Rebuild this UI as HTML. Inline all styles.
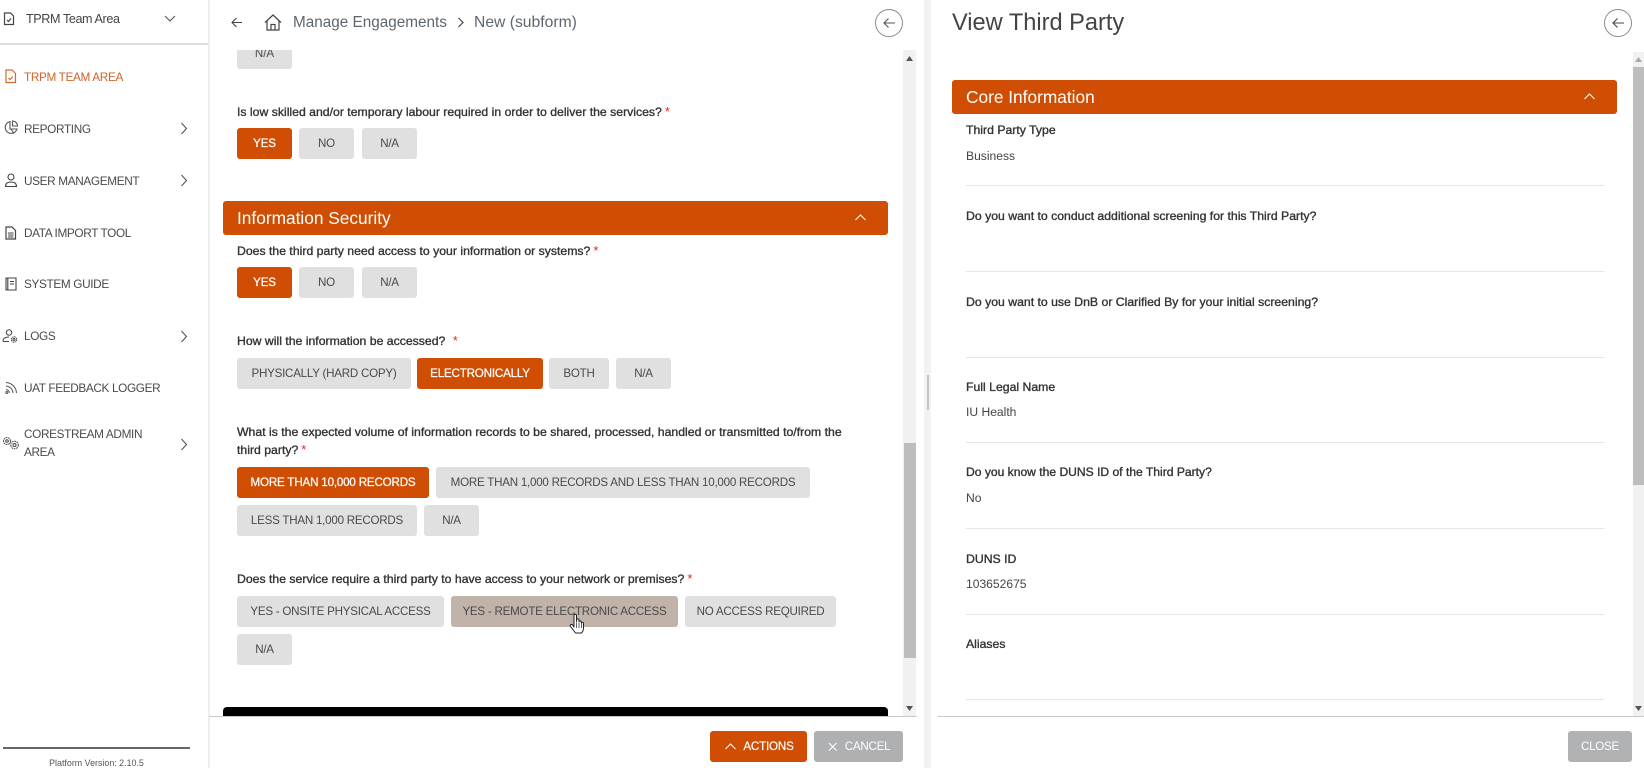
<!DOCTYPE html>
<html lang="en"><head><meta charset="utf-8"><title>View Third Party</title>
<style>
html,body{margin:0;padding:0;width:1644px;height:768px;overflow:hidden;background:#fff}
body{font-family:"Liberation Sans",Arial,sans-serif;position:relative;color:#333}
.a,.t,.b,.l,.v,.n{position:absolute}
.t,.l,.v,.n{white-space:nowrap}
.n{left:24px;font-size:11.8px;letter-spacing:-.36px;line-height:16px;color:#4a4a4a}
.l{font-size:12.25px;line-height:16px;color:#333;-webkit-text-stroke:.35px #333}
.l i{color:#e22;font-style:normal;-webkit-text-stroke:0;font-size:13px;margin-left:3px}
.v{font-size:12.1px;line-height:16px;color:#444;left:966px}
.b{height:31px;line-height:31px;background:#e0e0e0;color:#4a4a4a;font-size:11.6px;letter-spacing:-.24px;text-align:center;border-radius:3px;white-space:nowrap}
.b.o{background:#d04e03;color:#fff;-webkit-text-stroke:.25px #fff;letter-spacing:-.18px}
.bar{position:absolute;height:34px;background:#d04e03;border-radius:3px}
.bar span{position:absolute;top:0;line-height:34px;color:#fff;font-size:17.3px;white-space:nowrap}
.line{position:absolute;left:966px;width:638px;height:1px;background:#e6e6e6}
svg{position:absolute;overflow:visible;fill:none}
</style></head><body>

<!-- Sidebar -->
<div class="a" style="left:208px;top:0;width:2px;height:768px;background:#eeeeee"></div>
<div class="a" style="left:0;top:43px;width:208px;height:2px;background:#dcdcdc"></div>
<svg style="left:3px;top:12px" width="12" height="14" stroke="#444" stroke-width="1.2"><path d="M1.500 1h6l3 3v8.500h-9z"/><path d="M4 8l1.500 1.500L8 6.500"/></svg>
<div class="t" style="left:26px;top:11px;font-size:12.6px;letter-spacing:-.4px;line-height:16px;color:#444">TPRM Team Area</div>
<svg style="left:164px;top:15px" width="12" height="8" stroke="#555" stroke-width="1.1"><path d="M1 1l5 5 5-5"/></svg>

<svg style="left:5px;top:69px" width="12" height="15" stroke="#d2692e" stroke-width="1.2"><path d="M1 1h6l3.500 3.500V13.500H1z"/><path d="M3.500 9l1.500 1.500L8 7.500"/></svg>
<div class="n" style="top:68.500px;color:#d2622a">TRPM TEAM AREA</div>

<svg style="left:4px;top:120px" width="15" height="15" stroke="#555" stroke-width="1.1"><path d="M6 1.500A6 6 0 1 0 13 9H6z"/><path d="M8.500 1a5 5 0 0 1 5 5h-5z"/><path d="M7 9l3 4.500"/></svg>
<div class="n" style="top:120.500px">REPORTING</div>
<svg style="left:180px;top:122px" width="8" height="13" stroke="#555" stroke-width="1.1"><path d="M1.500 1l5 5.500-5 5.500"/></svg>

<svg style="left:4px;top:173px" width="14" height="15" stroke="#444" stroke-width="1.1"><circle cx="7" cy="4" r="3"/><path d="M1.500 13.500c0-3 2-4.500 5.500-4.500s5.500 1.500 5.500 4.500z"/></svg>
<div class="n" style="top:172.500px">USER MANAGEMENT</div>
<svg style="left:180px;top:174px" width="8" height="13" stroke="#555" stroke-width="1.1"><path d="M1.500 1l5 5.500-5 5.500"/></svg>

<svg style="left:5px;top:226px" width="12" height="14" stroke="#444" stroke-width="1.2"><path d="M1 1h6l3.500 3.500V13H1z"/><path d="M3 7h5.500M3 9h5.500M3 11h5.500" stroke-width="1.100"/></svg>
<div class="n" style="top:224.500px">DATA IMPORT TOOL</div>

<svg style="left:5px;top:277px" width="12" height="14" stroke="#444" stroke-width="1.100"><path d="M1 1h10v12H1zM2.800 1v12M5 4.500h4M5 7h4"/></svg>
<div class="n" style="top:276px">SYSTEM GUIDE</div>

<svg style="left:2px;top:329px" width="16" height="15" stroke="#444" stroke-width="1"><circle cx="7" cy="3.500" r="2.700"/><path d="M1 12.500c0-3 2-4.500 6-4.500"/><path d="M1 12.500h6"/><circle cx="12" cy="10.500" r="2.700" stroke-dasharray="1.500 .6"/><circle cx="12" cy="10.500" r="1"/></svg>
<div class="n" style="top:328px">LOGS</div>
<svg style="left:180px;top:330px" width="8" height="13" stroke="#555" stroke-width="1.1"><path d="M1.500 1l5 5.500-5 5.500"/></svg>

<svg style="left:5px;top:381px" width="12" height="13" stroke="#555" stroke-width="1"><path d="M1 5a7.500 7.500 0 0 1 7 7M1 1.500a11 11 0 0 1 10.500 10.500M1 8.500a4 4 0 0 1 3.500 3.500"/><circle cx="1.800" cy="11.500" r="1"/></svg>
<div class="n" style="top:380px">UAT FEEDBACK LOGGER</div>

<svg style="left:2px;top:436px" width="18" height="15" stroke="#444" stroke-width="1"><circle cx="5" cy="5" r="3.500" stroke-dasharray="1.800 .7"/><circle cx="5" cy="5" r="1.300"/><circle cx="12.500" cy="9" r="3.800" stroke-dasharray="1.800 .7"/><circle cx="12.500" cy="9" r="1.500"/></svg>
<div class="n" style="top:426px">CORESTREAM ADMIN</div>
<div class="n" style="top:444px">AREA</div>
<svg style="left:180px;top:438px" width="8" height="13" stroke="#555" stroke-width="1.1"><path d="M1.500 1l5 5.500-5 5.500"/></svg>

<div class="a" style="left:3px;top:747px;width:187px;height:2px;background:#666"></div>
<div class="t" style="left:0;top:757px;width:193px;text-align:center;font-size:8.9px;line-height:12px;color:#555">Platform Version: 2.10.5</div>

<!-- Middle header -->
<svg style="left:231px;top:17px" width="12" height="11" stroke="#444" stroke-width="1.1"><path d="M11 5.500H1M5.500 1L1 5.500 5.500 10"/></svg>
<svg style="left:264px;top:14px" width="18" height="17" stroke="#444" stroke-width="1.2"><path d="M1 8.500L9 1l8 7.500M3 7v9h12V7"/><path d="M7 16v-5.500h4V16"/></svg>
<div class="t" style="left:293px;top:13px;font-size:15.3px;line-height:19px;color:#5c6670">Manage Engagements</div>
<svg style="left:456.500px;top:17px" width="8" height="11" stroke="#444" stroke-width="1.2"><path d="M1.500 1l4.500 4.500L1.500 10"/></svg>
<div class="t" style="left:474px;top:13px;font-size:15.7px;line-height:19px;color:#5c6670">New (subform)</div>
<svg style="left:875px;top:8.500px" width="28" height="28" stroke="#8a8a8a" stroke-width="1"><circle cx="14" cy="14" r="13.500"/><path d="M20 14H9M13.500 9.500L9 14l4.500 4.500" stroke="#555" stroke-width="1.1"/></svg>

<!-- Middle scrollbar -->
<div class="a" style="left:903px;top:50px;width:13px;height:666px;background:#f1f1f1"></div>
<div class="a" style="left:903.500px;top:443px;width:12px;height:215px;background:#bdbdbd"></div>
<svg style="left:906px;top:56px" width="8" height="5"><path d="M0 5L3.500 0 7 5z" fill="#555"/></svg>
<svg style="left:906px;top:706px" width="8" height="5"><path d="M0 0L3.500 5 7 0z" fill="#555"/></svg>

<!-- Middle content -->
<div class="a" style="left:237px;top:50px;width:55px;height:19px;background:#e0e0e0;border-radius:0 0 3px 3px;overflow:hidden"><div style="position:absolute;top:-12px;width:55px;text-align:center;font-size:11.6px;line-height:31px;color:#4a4a4a">N/A</div></div>

<div class="l" style="left:237px;top:103.500px">Is low skilled and/or temporary labour required in order to deliver the services?<i>*</i></div>
<div class="b o" style="left:237px;top:128px;width:55px">YES</div>
<div class="b" style="left:299px;top:128px;width:55px">NO</div>
<div class="b" style="left:362px;top:128px;width:55px">N/A</div>

<div class="bar" style="left:223px;top:201px;width:665px"><span style="left:14px">Information Security</span>
<svg style="left:632px;top:13px" width="11" height="7" stroke="#fff" stroke-width="1"><path d="M.5 6L5.500 1l5 5"/></svg></div>

<div class="l" style="left:237px;top:242.500px">Does the third party need access to your information or systems?<i>*</i></div>
<div class="b o" style="left:237px;top:267px;width:55px">YES</div>
<div class="b" style="left:299px;top:267px;width:55px">NO</div>
<div class="b" style="left:362px;top:267px;width:55px">N/A</div>

<div class="l" style="left:237px;top:333px">How will the information be accessed? <i style="margin-left:4px">*</i></div>
<div class="b" style="left:237px;top:358px;width:174px">PHYSICALLY (HARD COPY)</div>
<div class="b o" style="left:417px;top:358px;width:126px">ELECTRONICALLY</div>
<div class="b" style="left:549px;top:358px;width:60px">BOTH</div>
<div class="b" style="left:616px;top:358px;width:55px">N/A</div>

<div class="l" style="left:237px;top:424px">What is the expected volume of information records to be shared, processed, handled or transmitted to/from the</div>
<div class="l" style="left:237px;top:442px">third party?<i>*</i></div>
<div class="b o" style="left:237px;top:467px;width:192px">MORE THAN 10,000 RECORDS</div>
<div class="b" style="left:436px;top:467px;width:374px">MORE THAN 1,000 RECORDS AND LESS THAN 10,000 RECORDS</div>
<div class="b" style="left:237px;top:505px;width:180px">LESS THAN 1,000 RECORDS</div>
<div class="b" style="left:424px;top:505px;width:55px">N/A</div>

<div class="l" style="left:237px;top:571px">Does the service require a third party to have access to your network or premises?<i>*</i></div>
<div class="b" style="left:237px;top:596px;width:207px">YES - ONSITE PHYSICAL ACCESS</div>
<div class="b" style="left:451px;top:596px;width:227px;background:#c1b3aa">YES - REMOTE ELECTRONIC ACCESS</div>
<div class="b" style="left:685px;top:596px;width:151px">NO ACCESS REQUIRED</div>
<div class="b" style="left:237px;top:634px;width:55px">N/A</div>

<svg style="left:569px;top:613px" width="17" height="22" stroke="#222" stroke-width="1" stroke-linejoin="round"><path d="M5 14V2.500c0-1.700 2.500-1.700 2.500 0V9l0-2c0-1.500 2.500-1.500 2.500 0v2c0-1.300 2.300-1.300 2.300 0v1c0-1 2.200-1 2.200.5v4.500c0 2-1 4-2 5H6.500L1.500 13.500c-1-1.500 1-2.800 2-1.700z" fill="#fff"/><path d="M7.500 10v5M10 10v5M12.500 10v5" stroke-width=".7"/></svg>

<div class="a" style="left:223px;top:707px;width:665px;height:9px;background:#000;border-radius:4px 4px 0 0"></div>

<!-- Middle footer -->
<div class="a" style="left:209px;top:716px;width:708px;height:1px;background:#c9c9c9"></div>
<div class="b o" style="left:710px;top:731px;width:97px;-webkit-text-stroke:.2px #fff;padding-left:20px;box-sizing:border-box">ACTIONS</div>
<svg style="left:725px;top:743px" width="11" height="7" stroke="#fff" stroke-width="1"><path d="M.5 6L5.500 1l5 5"/></svg>
<div class="b" style="left:814px;top:731px;width:89px;background:#aeb0b2;color:#fff;padding-left:18px;box-sizing:border-box">CANCEL</div>
<svg style="left:828px;top:742px" width="10" height="10" stroke="#fff" stroke-width="1"><path d="M1 1l7.500 7.500M8.500 1L1 8.500"/></svg>

<!-- Splitter -->
<div class="a" style="left:924px;top:0;width:7px;height:768px;background:#f2f2f2"></div>
<div class="a" style="left:926.500px;top:375px;width:2px;height:35px;background:#c4c4c4"></div>

<!-- Right panel -->
<div class="t" style="left:952px;top:8.500px;font-size:23.6px;line-height:28px;color:#444">View Third Party</div>
<svg style="left:1604px;top:9px" width="28" height="28" stroke="#8a8a8a" stroke-width="1"><circle cx="14" cy="14" r="13.500"/><path d="M20 14H9M13.500 9.500L9 14l4.500 4.500" stroke="#444" stroke-width="1.100"/></svg>

<div class="bar" style="left:952px;top:80px;width:665px"><span style="left:14px">Core Information</span>
<svg style="left:632px;top:13px" width="11" height="7" stroke="#fff" stroke-width="1"><path d="M.5 6L5.500 1l5 5"/></svg></div>

<div class="a" style="left:1633px;top:52px;width:11px;height:664px;background:#f1f1f1"></div>
<div class="a" style="left:1633px;top:67px;width:11px;height:418px;background:#bdbdbd"></div>
<svg style="left:1635px;top:57px" width="8" height="5"><path d="M0 5L3.500 0 7 5z" fill="#aaa"/></svg>
<svg style="left:1635px;top:706px" width="8" height="5"><path d="M0 0L3.500 5 7 0z" fill="#555"/></svg>

<div class="l" style="left:966px;top:122px">Third Party Type</div>
<div class="v" style="top:147.500px">Business</div>
<div class="line" style="top:185px"></div>
<div class="l" style="left:966px;top:208px">Do you want to conduct additional screening for this Third Party?</div>
<div class="line" style="top:271px"></div>
<div class="l" style="left:966px;top:293.500px">Do you want to use DnB or Clarified By for your initial screening?</div>
<div class="line" style="top:356.500px"></div>
<div class="l" style="left:966px;top:379px">Full Legal Name</div>
<div class="v" style="top:404px">IU Health</div>
<div class="line" style="top:442px"></div>
<div class="l" style="left:966px;top:464px;font-size:12.1px">Do you know the DUNS ID of the Third Party?</div>
<div class="v" style="top:490px">No</div>
<div class="line" style="top:527.500px"></div>
<div class="l" style="left:966px;top:550.500px">DUNS ID</div>
<div class="v" style="top:575.500px">103652675</div>
<div class="line" style="top:613.500px"></div>
<div class="l" style="left:966px;top:635.500px">Aliases</div>
<div class="line" style="top:698.500px"></div>

<div class="a" style="left:938px;top:716px;width:706px;height:1px;background:#c9c9c9"></div>
<div class="b" style="left:1568px;top:731px;width:64px;background:#b0b2b4;color:#fff">CLOSE</div>

</body></html>
